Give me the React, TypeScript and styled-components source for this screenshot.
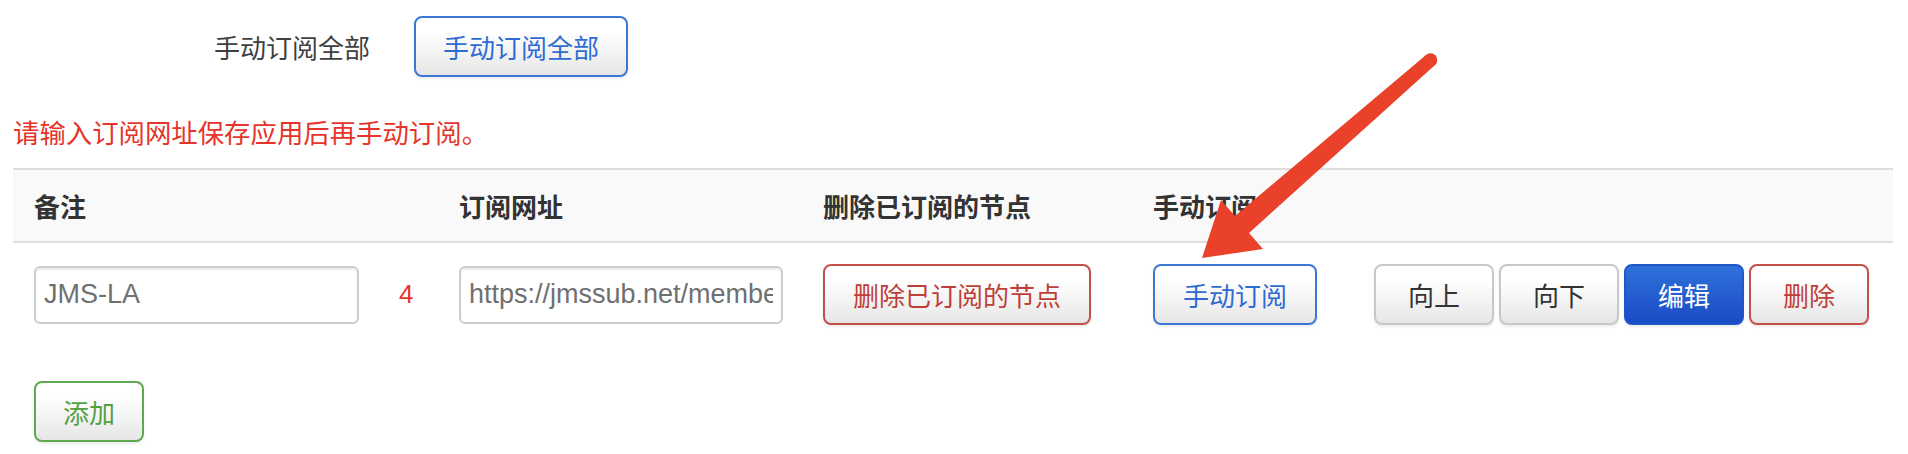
import React from "react";
import styled, { createGlobalStyle, css } from "styled-components";

const Global = createGlobalStyle`
  html, body { margin: 0; padding: 0; background: #fff; }
  body {
    font-family: "Liberation Sans", "Noto Sans CJK SC", sans-serif;
    color: #333;
  }
  * { box-sizing: border-box; }
`;

const Page = styled.div`
  position: relative;
  width: 1908px;
  height: 454px;
  padding: 16px 15px 0 13px;
  overflow: hidden;
`;

const TopRow = styled.div`
  display: flex;
  align-items: center;
  gap: 44px;
`;

const TopLabel = styled.div`
  width: 357px;
  text-align: right;
  font-family: "Noto Sans CJK SC", sans-serif;
  font-size: 26px;
  line-height: 36px;
  color: #404040;
`;

type Variant = "default" | "blue" | "danger" | "success" | "primary";

const variants: Record<Variant, ReturnType<typeof css>> = {
  default: css`
    border-color: #c8c8c8;
    color: #333;
  `,
  blue: css`
    border-color: #3b78d6;
    color: #2e6bd3;
  `,
  danger: css`
    border-color: #c5504a;
    color: #bf3f38;
  `,
  success: css`
    border-color: #5ea94f;
    color: #53a043;
  `,
  primary: css`
    border-color: #1f57c9;
    color: #fff;
    background: linear-gradient(#2f71da, #1a4bc6);
  `,
};

const Button = styled.button<{ $variant?: Variant; $w?: number }>`
  display: inline-flex;
  align-items: center;
  justify-content: center;
  height: 61px;
  ${(p) => (p.$w ? `width: ${p.$w}px;` : "padding: 0 28px;")}
  border: 2px solid;
  border-radius: 8px;
  background: linear-gradient(#ffffff 25%, #e6e6e6);
  box-shadow: 0 2px 3px rgba(0, 0, 0, 0.08);
  font-family: "Noto Sans CJK SC", "Liberation Sans", sans-serif;
  font-size: 26px;
  line-height: 1;
  cursor: pointer;
  flex-shrink: 0;
  ${(p) => variants[p.$variant || "default"]}
`;

const Notice = styled.div`
  margin-top: 37px;
  font-family: "Noto Sans CJK SC", sans-serif;
  font-size: 26.4px;
  line-height: 36px;
  color: #e5352b;
`;

const Table = styled.div`
  margin-top: 18px;
`;

const cols = "425px 364px 330px 221px 1fr";

const HeadRow = styled.div`
  display: grid;
  grid-template-columns: ${cols};
  height: 75px;
  align-items: center;
  background: #f9f9f9;
  border-top: 2px solid #dedede;
  border-bottom: 2px solid #dedede;
`;

const HeadCell = styled.div`
  padding-left: 21px;
  font-family: "Noto Sans CJK SC", sans-serif;
  font-weight: 700;
  font-size: 26px;
  line-height: 36px;
  color: #333;
  white-space: nowrap;
`;

const BodyRow = styled.div`
  display: grid;
  grid-template-columns: ${cols};
  align-items: center;
  padding: 21px 0;
`;

const Cell = styled.div<{ $gap?: number }>`
  padding-left: 21px;
  display: flex;
  align-items: center;
  gap: ${(p) => p.$gap ?? 0}px;
`;

const Input = styled.input<{ $w?: number }>`
  width: ${(p) => p.$w ?? 325}px;
  height: 58px;
  border: 2px solid #cdcdcd;
  border-radius: 6px;
  padding: 0 8px;
  font-family: "Liberation Sans", sans-serif;
  font-size: 27px;
  color: #707070;
  background: #fff;
  box-shadow: inset 0 2px 2px rgba(0, 0, 0, 0.075);
  outline: none;
`;

const Count = styled.span`
  font-family: "Liberation Sans", sans-serif;
  font-size: 26px;
  color: #e5352b;
`;

const Footer = styled.div`
  margin-top: 35px;
  padding-left: 21px;
`;

const ArrowSvg = styled.svg`
  position: absolute;
  left: 0;
  top: 0;
  pointer-events: none;
`;

export default function App() {
  return (
    <>
      <Global />
      <Page>
        <TopRow>
          <TopLabel>手动订阅全部</TopLabel>
          <Button $variant="blue" $w={214}>手动订阅全部</Button>
        </TopRow>
        <Notice>请输入订阅网址保存应用后再手动订阅。</Notice>
        <Table>
          <HeadRow>
            <HeadCell>备注</HeadCell>
            <HeadCell>订阅网址</HeadCell>
            <HeadCell>删除已订阅的节点</HeadCell>
            <HeadCell>手动订阅</HeadCell>
            <HeadCell />
          </HeadRow>
          <BodyRow>
            <Cell $gap={40}>
              <Input defaultValue="JMS-LA" />
              <Count>4</Count>
            </Cell>
            <Cell>
              <Input $w={324} defaultValue="https://jmssub.net/members/getsub.php" />
            </Cell>
            <Cell>
              <Button $variant="danger" $w={268}>删除已订阅的节点</Button>
            </Cell>
            <Cell>
              <Button $variant="blue" $w={164}>手动订阅</Button>
            </Cell>
            <Cell $gap={5}>
              <Button $w={120}>向上</Button>
              <Button $w={120}>向下</Button>
              <Button $variant="primary" $w={120}>编辑</Button>
              <Button $variant="danger" $w={120}>删除</Button>
            </Cell>
          </BodyRow>
        </Table>
        <Footer>
          <Button $variant="success" $w={110}>添加</Button>
        </Footer>
        <ArrowSvg width="1908" height="454" viewBox="0 0 1908 454">
          <polygon
            points="1426,55 1235,216 1221,200 1202,258 1263,249 1249,233 1435,65"
            fill="#e9412a"
            strokeLinejoin="round"
          />
          <circle cx="1430.5" cy="60" r="6.8" fill="#e9412a" />
        </ArrowSvg>
      </Page>
    </>
  );
}
